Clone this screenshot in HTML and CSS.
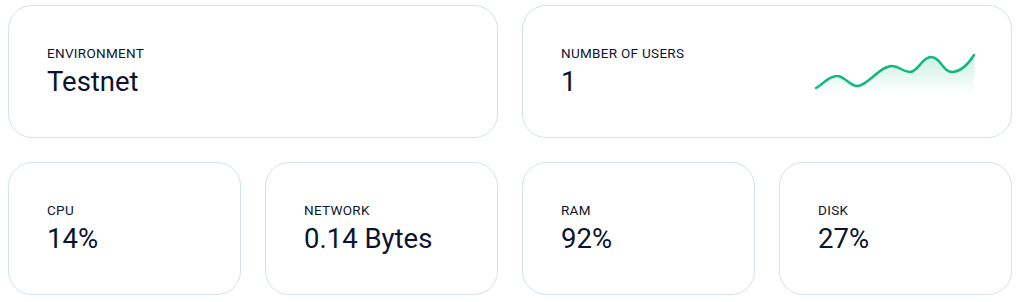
FILE: index.html
```
<!DOCTYPE html>
<html>
<head>
<meta charset="utf-8">
<link rel="stylesheet" href="styles.css">
</head>
<body>
<div class="dash">
  <div class="row row-top">
    <div class="card">
      <div class="info">
        <div class="label">ENVIRONMENT</div>
        <div class="value">Testnet</div>
      </div>
    </div>
    <div class="card card-chart">
      <div class="info">
        <div class="label">NUMBER OF USERS</div>
        <div class="value">1</div>
      </div>
      <svg class="spark" width="162" height="40" viewBox="0 0 162 40">
        <defs>
          <linearGradient id="fillg" x1="0" y1="0" x2="0" y2="1">
            <stop offset="0" stop-color="#10b981" stop-opacity="0.22"/>
            <stop offset="1" stop-color="#10b981" stop-opacity="0"/>
          </linearGradient>
        </defs>
        <path d="M2 34 C10 30 14 22 23 22 C31 22 36 33 44 32 C54 31 66 12 78 12 C86 12 88 18 96 18 C104 18 108 3 117 3 C127 3 129 19 139 18 C148 17 155 9 160 1 L160 40 L2 40 Z" fill="url(#fillg)"/>
        <path d="M2 34 C10 30 14 22 23 22 C31 22 36 33 44 32 C54 31 66 12 78 12 C86 12 88 18 96 18 C104 18 108 3 117 3 C127 3 129 19 139 18 C148 17 155 9 160 1" fill="none" stroke="#10b981" stroke-width="2.5" stroke-linecap="round"/>
      </svg>
    </div>
  </div>
  <div class="row row-bottom">
    <div class="card">
      <div class="info">
        <div class="label">CPU</div>
        <div class="value">14%</div>
      </div>
    </div>
    <div class="card">
      <div class="info">
        <div class="label">NETWORK</div>
        <div class="value">0.14 Bytes</div>
      </div>
    </div>
    <div class="card">
      <div class="info">
        <div class="label">RAM</div>
        <div class="value">92%</div>
      </div>
    </div>
    <div class="card">
      <div class="info">
        <div class="label">DISK</div>
        <div class="value">27%</div>
      </div>
    </div>
  </div>
</div>
</body>
</html>
```
FILE: styles.css
```
html, body {
  margin: 0;
  padding: 0;
  background: #ffffff;
}
body {
  font-family: "Roboto", "Liberation Sans", sans-serif;
  color: #0d1530;
}
.dash {
  width: 1004px;
  padding: 5px 0 0 8px;
  display: flex;
  flex-direction: column;
  gap: 24px;
}
.row {
  display: grid;
  gap: 24px;
}
.row-top {
  grid-template-columns: 1fr 1fr;
}
.row-bottom {
  grid-template-columns: repeat(4, 1fr);
}
.card {
  box-sizing: border-box;
  height: 133px;
  border: 1px solid #d3e2ee;
  border-radius: 24px;
  padding: 0 35px 0 38px;
  display: flex;
  align-items: center;
  justify-content: space-between;
  background: #fff;
}
.info {
  display: flex;
  flex-direction: column;
}
.label {
  font-size: 13.5px;
  line-height: 16px;
  letter-spacing: 0.3px;
  color: #0d1530;
}
.value {
  font-size: 27.5px;
  line-height: 34px;
  margin-top: 4px;
  color: #0b1330;
}
.spark {
  display: block;
  margin-top: 4px;
}
```
